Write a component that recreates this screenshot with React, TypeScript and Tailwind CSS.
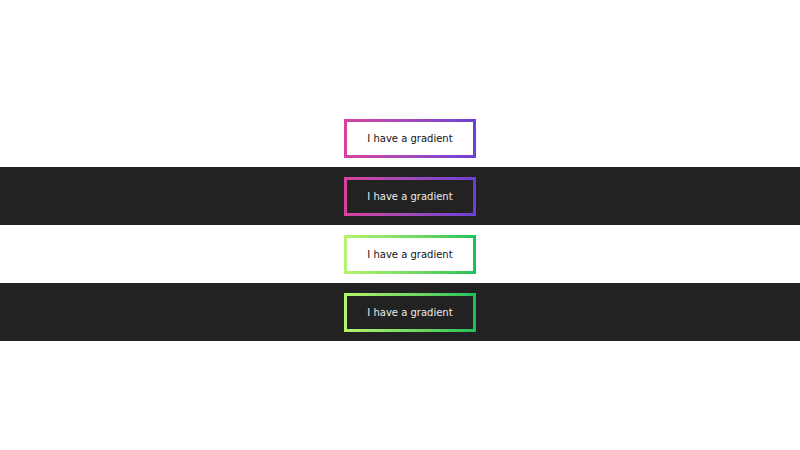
const rows = [
  { dark: false, grad: 'bg-gradient-to-r from-[#d9409e] to-[#6b3fd6]' },
  { dark: true, grad: 'bg-gradient-to-r from-[#d9409e] to-[#6b3fd6]' },
  { dark: false, grad: 'bg-gradient-to-r from-[#b4f46c] to-[#14c25a]' },
  { dark: true, grad: 'bg-gradient-to-r from-[#b4f46c] to-[#14c25a]' },
];

function GradientButton({ dark, grad }: { dark: boolean; grad: string }) {
  return (
    <button className={`${grad} p-[3px]`}>
      <span
        className={`block px-[20px] pt-[11px] pb-[10px] text-[10px] leading-[12px] ${
          dark ? 'bg-[#222222] text-[#ececec]' : 'bg-white text-[#111]'
        }`}
      >
        I have a gradient
      </span>
    </button>
  );
}

export default function App() {
  return (
    <div className="w-[800px] h-[450px] flex flex-col justify-center bg-white font-['DejaVu_Sans',sans-serif]">
      {rows.map((r, i) => (
        <div
          key={i}
          className={`h-[58px] flex items-center justify-center pl-[20px] ${r.dark ? 'bg-[#222222]' : 'bg-white'}`}
        >
          <GradientButton dark={r.dark} grad={r.grad} />
        </div>
      ))}
    </div>
  );
}
